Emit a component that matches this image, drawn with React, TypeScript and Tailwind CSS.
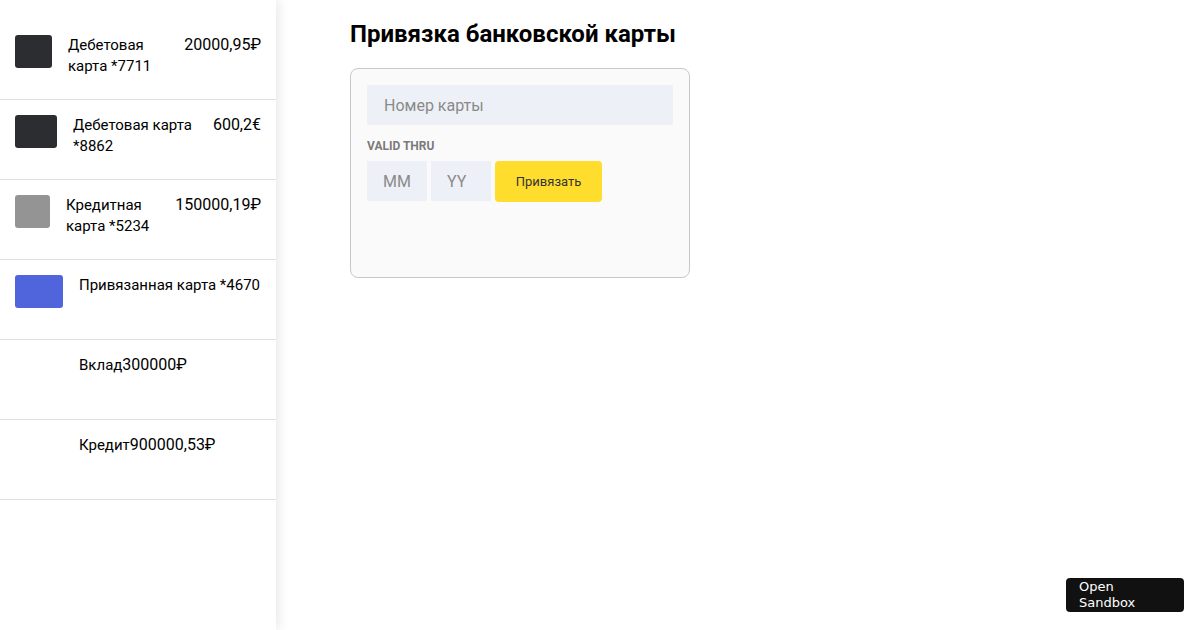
const accounts = [
  { name: 'Дебетовая карта *7711', amount: '20000,95₽', color: 'bg-[#2c2d31]', w: 'w-[37px]' },
  { name: 'Дебетовая карта *8862', amount: '600,2€', color: 'bg-[#2c2d31]', w: 'w-[42px]' },
  { name: 'Кредитная карта *5234', amount: '150000,19₽', color: 'bg-[#949494]', w: 'w-[35px]' },
  { name: 'Привязанная карта *4670', amount: '', color: 'bg-[#5064dc]', w: 'w-[48px]' },
  { name: 'Вклад', amount: '300000₽', color: '', w: 'w-[48px]', inline: true },
  { name: 'Кредит', amount: '900000,53₽', color: '', w: 'w-[48px]', inline: true },
];

export default function App() {
  return (
    <div className="flex h-[630px] bg-white font-['Roboto',sans-serif] text-black">
      <aside className="w-[276px] shrink-0 pt-5 shadow-[4px_0_10px_rgba(0,0,0,0.08)] z-10 bg-white">
        {accounts.map((a) => (
          <div key={a.name} className="flex h-[80px] items-start border-b border-[#e0e0e0] pl-[15px] pr-[15px] pt-[15px]">
            <div className={`${a.w} h-[33px] shrink-0 rounded-[3px] ${a.color}`} />
            {a.inline ? (
              <div className="ml-4 text-[15px] leading-[21px] -mt-[1px]">
                {a.name}
                <span className="text-[16px]">{a.amount}</span>
              </div>
            ) : (
              <>
                <div className="ml-4 flex-1 text-[15px] leading-[21px]">{a.name}</div>
                {a.amount && (
                  <div className="ml-2 text-[16px] leading-[21px] -mt-[1px] whitespace-nowrap">{a.amount}</div>
                )}
              </>
            )}
          </div>
        ))}
      </aside>

      <main className="flex-1 pl-[74px] pt-[19px] relative">
        <h1 className="text-[24px] font-bold leading-[30px]">Привязка банковской карты</h1>
        <div className="mt-[19px] w-[340px] h-[210px] rounded-lg border border-[#c8c8c8] bg-[#fafafa] p-4">
          <input
            placeholder="Номер карты"
            className="w-full h-10 bg-[#edf1f7] px-[17px] text-[16px] outline-none placeholder:text-[#8a8a8a]"
          />
          <div className="mt-[14px] text-[12px] font-bold text-[#7a7a7a] leading-[14px]">VALID THRU</div>
          <div className="mt-[8px] flex gap-1">
            <input
              placeholder="MM"
              className="w-[60px] h-10 bg-[#edf1f7] px-4 text-[16px] outline-none placeholder:text-[#8a8a8a]"
            />
            <input
              placeholder="YY"
              className="w-[60px] h-10 bg-[#edf1f7] px-4 text-[16px] outline-none placeholder:text-[#8a8a8a]"
            />
            <button className="w-[107px] h-[41px] rounded bg-[#ffdd2d] text-[13px] text-[#333]">
              Привязать
            </button>
          </div>
        </div>
        <button className="absolute right-4 bottom-[18px] w-[118px] h-[34px] rounded bg-[#111] text-left px-[13px] text-[13px] leading-[16px] text-white font-['DejaVu_Sans',sans-serif]">
          Open Sandbox
        </button>
      </main>
    </div>
  );
}
